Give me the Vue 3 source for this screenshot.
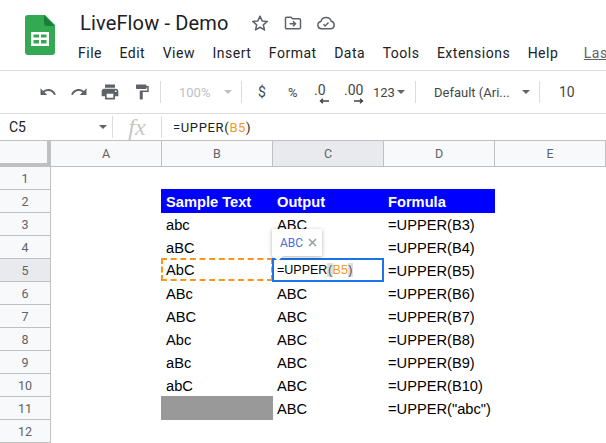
<script setup>
const menus = ["File", "Edit", "View", "Insert", "Format", "Data", "Tools", "Extensions", "Help"];
const cols = [
  { name: "A", active: false },
  { name: "B", active: false },
  { name: "C", active: true },
  { name: "D", active: false },
  { name: "E", active: false },
];
const rows = [
  { n: 1, b: "", c: "", d: "" },
  { n: 2, b: "Sample Text", c: "Output", d: "Formula", head: true },
  { n: 3, b: "abc", c: "ABC", d: "=UPPER(B3)" },
  { n: 4, b: "aBC", c: "", d: "=UPPER(B4)" },
  { n: 5, b: "AbC", c: "", d: "=UPPER(B5)", active: true },
  { n: 6, b: "ABc", c: "ABC", d: "=UPPER(B6)" },
  { n: 7, b: "ABC", c: "ABC", d: "=UPPER(B7)" },
  { n: 8, b: "Abc", c: "ABC", d: "=UPPER(B8)" },
  { n: 9, b: "aBc", c: "ABC", d: "=UPPER(B9)" },
  { n: 10, b: "abC", c: "ABC", d: "=UPPER(B10)" },
  { n: 11, b: "", c: "ABC", d: '=UPPER("abc")', grey: true },
  { n: 12, b: "", c: "", d: "" },
];
</script>

<template>
  <div class="app">
    <header class="top">
      <svg class="logo" width="30" height="40" viewBox="0 0 30 40">
        <path d="M3 0h17l10 10v27a3 3 0 0 1-3 3H3a3 3 0 0 1-3-3V3a3 3 0 0 1 3-3z" fill="#34a853" />
        <path d="M19 0l11 11H22a3 3 0 0 1-3-3z" fill="#188038" />
        <path d="M6 17h18v14H6z" fill="#fff" />
        <path d="M8.500 19.500h5.500v3h-5.500zM16 19.500h5.500v3H16zM8.500 25h5.500v3.500h-5.500zM16 25h5.500v3.500H16z" fill="#34a853" />
      </svg>
      <div class="top__main">
        <div class="title-row">
          <span class="title">LiveFlow - Demo</span>
          <svg class="star" width="20" height="20" viewBox="0 0 24 24">
            <path d="M12 3.800l2.500 5.700 6.200.6-4.700 4.100 1.400 6.100L12 17.100l-5.400 3.200L8 14.200 3.300 10.100l6.200-.6z" fill="none" stroke="#5f6368" stroke-width="1.800" stroke-linejoin="round" />
          </svg>
          <svg class="move" width="20" height="20" viewBox="0 0 24 24">
            <path d="M3 6.500a1.500 1.500 0 0 1 1.500-1.500h5l2 2h8a1.500 1.500 0 0 1 1.500 1.500v9a1.500 1.500 0 0 1-1.500 1.500h-15A1.500 1.500 0 0 1 3 17.500z" fill="none" stroke="#5f6368" stroke-width="1.800" />
            <path d="M8 13h6M12 10l3 3-3 3" fill="none" stroke="#5f6368" stroke-width="1.800" />
          </svg>
          <svg class="cloud" width="20" height="20" viewBox="0 0 24 24">
            <path d="M6.500 19a4.500 4.500 0 0 1-.6-8.900A6.500 6.500 0 0 1 18.300 10a4.600 4.600 0 0 1-.3 9z" fill="none" stroke="#5f6368" stroke-width="1.800" />
            <path d="M9 13.500l2 2 4-4" fill="none" stroke="#5f6368" stroke-width="1.800" />
          </svg>
        </div>
        <nav class="menu">
          <span v-for="m in menus" :key="m">{{ m }}</span>
          <span class="last">Las</span>
        </nav>
      </div>
    </header>

    <div class="toolbar">
      <svg class="undo" width="18" height="18" viewBox="0 0 24 24">
        <path d="M12.500 8c-2.700 0-5.100 1-7 2.600L2 7v9h9l-3.600-3.600c1.400-1.200 3.200-1.900 5.100-1.900 3.500 0 6.500 2.300 7.600 5.500l2.400-.8C21 11 17.100 8 12.500 8z" fill="#5f6368" />
      </svg>
      <svg class="redo" width="18" height="18" viewBox="0 0 24 24">
        <path d="M11.500 8c2.700 0 5.100 1 7 2.600L22 7v9h-9l3.600-3.600c-1.400-1.200-3.200-1.900-5.100-1.900-3.500 0-6.500 2.300-7.600 5.500l-2.400-.8C3 11 6.900 8 11.500 8z" fill="#5f6368" />
      </svg>
      <svg class="print" width="20" height="20" viewBox="0 0 24 24">
        <path d="M19 8H5a3 3 0 0 0-3 3v6h4v4h12v-4h4v-6a3 3 0 0 0-3-3zm-3 11H8v-5h8zm3-7a1 1 0 1 1 0-2 1 1 0 0 1 0 2zM18 3H6v4h12z" fill="#5f6368" />
      </svg>
      <svg class="paint" width="18" height="18" viewBox="0 0 24 24">
        <path d="M18 4V3a1 1 0 0 0-1-1H5a1 1 0 0 0-1 1v4a1 1 0 0 0 1 1h12a1 1 0 0 0 1-1V6h1v4H9v11a1 1 0 0 0 1 1h2a1 1 0 0 0 1-1v-9h8V4z" fill="#5f6368" />
      </svg>
      <i class="sep sep--a"></i>
      <span class="zoom-val">100%</span>
      <i class="caret caret--light"></i>
      <i class="sep sep--b"></i>
      <span class="tool tool--dollar">$</span>
      <span class="tool tool--pct">%</span>
      <span class="dec dec--less">.0<svg width="10" height="6" viewBox="0 0 10 6"><path d="M10 3H2M4 .8L1.500 3 4 5.200" fill="none" stroke="#444" stroke-width="1.400" /></svg></span>
      <span class="dec dec--more">.00<svg width="10" height="6" viewBox="0 0 10 6"><path d="M0 3h8M6 .8L8.500 3 6 5.200" fill="none" stroke="#444" stroke-width="1.400" /></svg></span>
      <span class="tool tool--num">123</span>
      <i class="caret caret--num"></i>
      <i class="sep sep--c"></i>
      <span class="tool tool--font">Default (Ari...</span>
      <i class="caret caret--font"></i>
      <i class="sep sep--d"></i>
      <span class="tool tool--size">10</span>
    </div>

    <div class="fbar">
      <span class="fbar__name">C5</span>
      <i class="caret caret--name"></i>
      <i class="fbar__sep"></i>
      <span class="fbar__fx">fx</span>
      <i class="fbar__sep"></i>
      <span class="fbar__text">=UPPER(<b>B5</b>)</span>
    </div>

    <div class="sheet">
      <div class="corner"></div>
      <div v-for="c in cols" :key="c.name" class="colhead" :class="{ 'colhead--on': c.active }">{{ c.name }}</div>
      <template v-for="r in rows" :key="r.n">
        <div class="rowhead" :class="{ 'rowhead--on': r.active }">{{ r.n }}</div>
        <div class="cell"></div>
        <div class="cell cell--b" :class="{ 'cell--head': r.head, 'cell--grey': r.grey, 'cell--copy': r.active }">{{ r.b }}</div>
        <div class="cell" :class="{ 'cell--head': r.head, 'cell--edit': r.active }">
          <template v-if="r.active">
            <span>=UPPER<em class="paren">(</em><b>B5</b><em class="paren">)</em></span>
            <div class="chip">
              ABC
              <svg class="chip__x" width="9" height="9" viewBox="0 0 9 9">
                <path d="M1 1l7 7M8 1L1 8" stroke="#9aa0a6" stroke-width="1.600" fill="none" />
              </svg>
            </div>
          </template>
          <template v-else>{{ r.c }}</template>
        </div>
        <div class="cell" :class="{ 'cell--head': r.head }">{{ r.d }}</div>
        <div class="cell"></div>
      </template>
    </div>
  </div>
</template>

<style scoped>
.app {
  width: 606px;
  height: 443px;
  overflow: hidden;
  background: #fff;
  font-family: Roboto, sans-serif;
  color: #202124;
}
.top {
  height: 71px;
  box-sizing: border-box;
  border-bottom: 1px solid #dadce0;
  display: flex;
  padding: 15px 0 0 25px;
}
.logo {
  flex: none;
  margin-right: 25px;
}
.top__main {
  flex: 1;
  margin-top: -5px;
}
.title-row {
  display: flex;
  align-items: center;
  height: 26px;
}
.title {
  font-size: 20px;
  letter-spacing: 0.15px;
  width: 170px;
}
.star {
  margin-right: 13px;
}
.move {
  margin-right: 13px;
}
.menu {
  display: flex;
  gap: 17.500px;
  font-size: 14px;
  letter-spacing: 0.5px;
  margin-top: 9px;
  margin-left: -2px;
  white-space: nowrap;
}
.last {
  color: #5f6368;
  text-decoration: underline;
  margin-left: 8px;
}
.toolbar {
  height: 42px;
  display: flex;
  align-items: center;
  padding-left: 39px;
  font-size: 13px;
  color: #444746;
  white-space: nowrap;
}
.undo {
  margin-right: 13px;
}
.redo {
  margin-right: 12px;
}
.print {
  margin-right: 13px;
}
.paint {
  margin-right: 9px;
}
.sep {
  width: 1px;
  height: 22px;
  background: #dadce0;
  flex: none;
}
.sep--a {
  margin-right: 18px;
}
.zoom-val {
  color: #bdc1c6;
  font-size: 13px;
  width: 45px;
}
.caret {
  width: 0;
  height: 0;
  border-left: 4.500px solid transparent;
  border-right: 4.500px solid transparent;
  border-top: 4.500px solid #5f6368;
  flex: none;
}
.caret--light {
  border-top-color: #bdc1c6;
  margin-right: 9px;
}
.sep--b {
  margin-right: 16px;
}
.tool--dollar {
  width: 30px;
  font-size: 14px;
}
.tool--pct {
  font-size: 13px;
  width: 26px;
}
.dec {
  position: relative;
  font-size: 14px;
  line-height: 14px;
  margin-top: -4px;
  display: block;
}
.dec svg {
  position: absolute;
  left: 5px;
  top: 15px;
}
.dec--less {
  width: 30px;
}
.dec--more {
  width: 29px;
}
.dec--more svg {
  left: 10px;
}
.tool--num {
  width: 24px;
}
.caret--num {
  margin-right: 10px;
}
.sep--c {
  margin-right: 18px;
}
.tool--font {
  font-size: 13px;
  width: 88px;
}
.caret--font {
  margin-right: 9px;
}
.sep--d {
  margin-right: 19px;
}
.tool--size {
  font-size: 14px;
}
.fbar {
  height: 27px;
  box-sizing: border-box;
  border-top: 1px solid #dadce0;
  display: flex;
  align-items: center;
  position: relative;
  font-size: 13px;
}
.fbar__name {
  width: 99px;
  padding-left: 9px;
  box-sizing: border-box;
  font-size: 14px;
}
.caret--name {
  margin-right: 5px;
}
.fbar__sep {
  width: 1px;
  height: 22px;
  background: #dadce0;
  flex: none;
}
.fbar__fx {
  width: 48px;
  text-align: center;
  font-family: "Liberation Serif", serif;
  font-style: italic;
  font-size: 24px;
  color: #c4c7c5;
}
.fbar__text {
  margin-left: 11px;
  font-size: 13px;
  letter-spacing: 0.65px;
}
.fbar__text b,
.cell b {
  font-weight: 400;
  color: #f7981d;
}
.sheet {
  display: grid;
  grid-template-columns: 51px repeat(5, 111px);
  grid-template-rows: 26px repeat(12, 23px);
  border-top: 1px solid #c0c0c0;
  box-sizing: border-box;
}
.corner {
  background: #f8f9fa;
  border-right: 4px solid #c0c0c0;
  border-bottom: 4px solid #c0c0c0;
  box-sizing: border-box;
}
.colhead,
.rowhead {
  background: #f8f9fa;
  border-right: 1px solid #c0c0c0;
  border-bottom: 1px solid #c0c0c0;
  box-sizing: border-box;
  display: flex;
  align-items: center;
  justify-content: center;
  font-size: 12.500px;
  color: #5f6368;
}
.colhead--on,
.rowhead--on {
  background: #e8eaed;
}
.cell {
  font-family: "Liberation Sans", Arial, sans-serif;
  font-size: 14.670px;
  color: #000;
  padding: 0 4px;
  display: flex;
  align-items: center;
  white-space: nowrap;
  position: relative;
  min-width: 0;
}
.cell--head {
  background: #0000ff;
  color: #fff;
  font-weight: 700;
  margin-top: -1px;
  padding-top: 1px;
}
.cell--grey {
  background: #999;
  margin-top: -1px;
}
.cell--b.cell--head,
.cell--b.cell--grey {
  margin-left: -1px;
  padding-left: 5px;
}
.cell--copy {
  border: 2px dashed #f7981d;
  padding: 0 3px;
  margin: -1px 0 1px -1px;
}
.cell--edit {
  border: 2px solid #1a73e8;
  margin: -1px 0 0 -1px;
  padding: 0 3px;
  z-index: 2;
  font-size: 12.500px;
}
.paren {
  font-style: normal;
  background: #e0e0e0;
  padding: 0 0.5px;
  color: #555;
}
.chip {
  position: absolute;
  left: -2px;
  top: -31px;
  width: 50px;
  height: 27px;
  background: #fff;
  box-shadow: 0 1px 4px rgba(0, 0, 0, 0.3);
  font-family: Roboto, sans-serif;
  font-size: 12px;
  color: #4a6fd8;
  display: flex;
  align-items: center;
  padding-left: 8px;
  box-sizing: border-box;
}
.chip::after {
  content: "";
  position: absolute;
  left: 1px;
  bottom: -5px;
  border-right: 5px solid transparent;
  border-left: 5px solid transparent;
  border-top: 5px solid #fff;
}
.chip__x {
  margin-left: 5px;
}
</style>

<style>
html,
body {
  margin: 0;
  padding: 0;
}
</style>
